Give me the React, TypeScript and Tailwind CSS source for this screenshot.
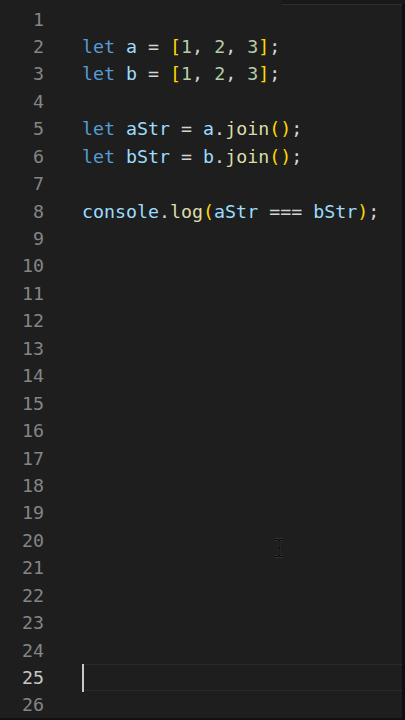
type Tok = [string, string]

const kw = "text-[#569cd6]"
const id = "text-[#9cdcfe]"
const op = "text-[#d4d4d4]"
const br = "text-[#ffd700]"
const num = "text-[#b5cea8]"
const fn = "text-[#dcdcaa]"

const arr = (name: string): Tok[] => [
  ["let ", kw],
  [name, id],
  [" = ", op],
  ["[", br],
  ["1", num],
  [", ", op],
  ["2", num],
  [", ", op],
  ["3", num],
  ["]", br],
  [";", op],
]

const joined = (name: string, src: string): Tok[] => [
  ["let ", kw],
  [name, id],
  [" = ", op],
  [src, id],
  [".", op],
  ["join", fn],
  ["()", br],
  [";", op],
]

const code: Record<number, Tok[]> = {
  2: arr("a"),
  3: arr("b"),
  5: joined("aStr", "a"),
  6: joined("bStr", "b"),
  8: [
    ["console", id],
    [".", op],
    ["log", fn],
    ["(", br],
    ["aStr", id],
    [" === ", op],
    ["bStr", id],
    [")", br],
    [";", op],
  ],
}

const lines = Array.from({ length: 26 }, (_, i) => i + 1)
const current = 25

export default function App() {
  return (
    <div className="relative h-[720px] w-[405px] overflow-hidden bg-[#1e1e1e] font-['DejaVu_Sans_Mono',monospace] text-[18.3px] leading-[27.44px]">
      <div className="pt-[5.5px]">
        {lines.map((n) => (
          <div key={n} className="flex h-[27.44px]">
            <div
              className={`w-[44px] shrink-0 text-right ${
                n === current ? "text-[#c6c6c6]" : "text-[#858585]"
              }`}
            >
              {n}
            </div>
            <div
              className={`ml-[38px] flex-1 whitespace-pre ${
                n === current ? "relative border-y border-[#2a2a2a]" : ""
              }`}
            >
              {code[n]?.map(([t, c], i) => (
                <span key={i} className={c}>
                  {t}
                </span>
              ))}
              {n === current && (
                <span className="absolute -top-px left-0 h-[28px] w-[2px] bg-[#c8c8c8]" />
              )}
            </div>
          </div>
        ))}
      </div>

      {/* top right strip */}
      <div className="absolute left-[282px] top-0 h-[5px] w-[123px] border-b border-[#2e2e2e] bg-[#181818]" />
      {/* right edge */}
      <div className="absolute right-0 top-[4px] h-full w-[3px] bg-[#0f0f0f]" />
      {/* bottom edge */}
      <div className="absolute bottom-0 left-0 h-[2px] w-full bg-[#111111]" />

      {/* mouse I-beam */}
      <svg className="absolute left-[274px] top-[538px]" width="10" height="20" viewBox="0 0 10 20">
        <path
          d="M1 1.5h3l1 1 1-1h3M5 2.5v15M1 18.5h3l1-1 1 1h3M3 10h4"
          fill="none"
          stroke="#3a3a3a"
          strokeWidth="2.4"
        />
        <path
          d="M1 1.5h3l1 1 1-1h3M5 2.5v15M1 18.5h3l1-1 1 1h3M3 10h4"
          fill="none"
          stroke="#0a0a0a"
          strokeWidth="1.2"
        />
      </svg>
    </div>
  )
}
